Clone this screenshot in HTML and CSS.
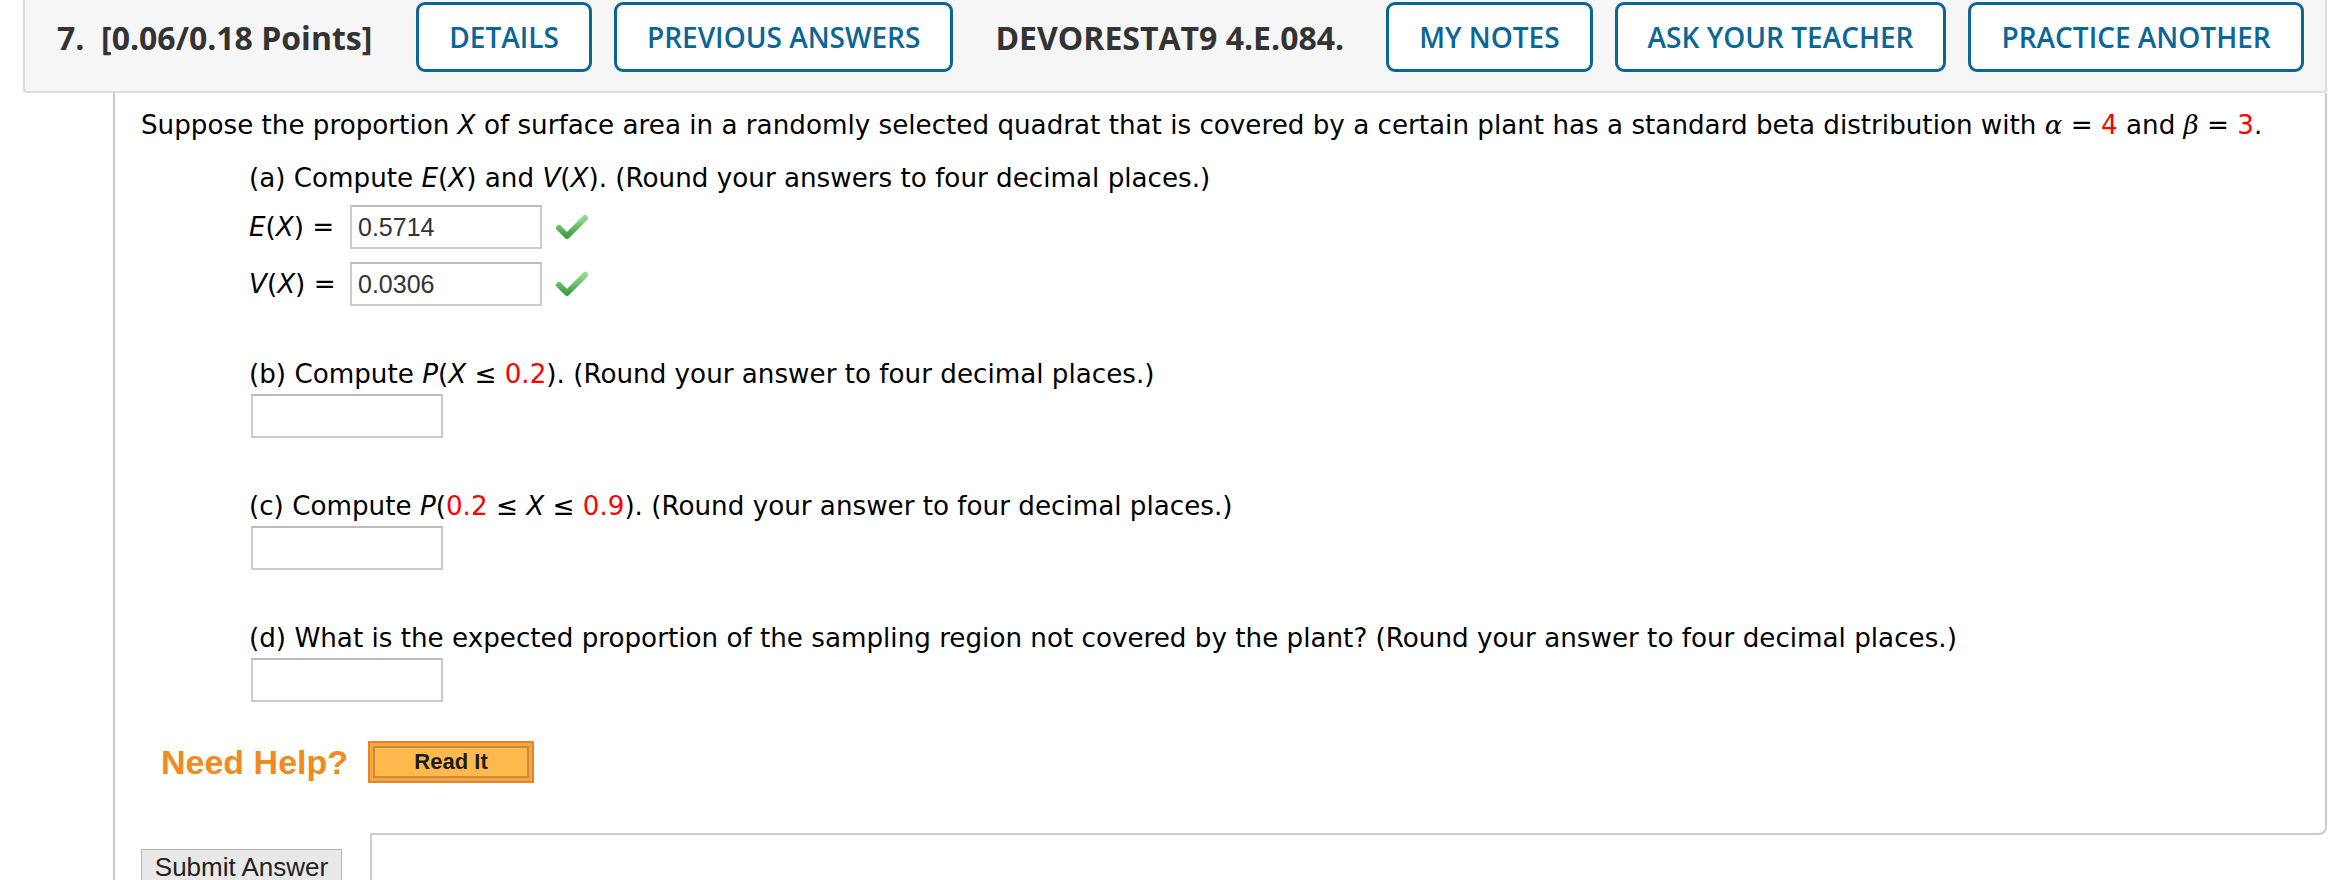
FILE: index.html
```html
<!DOCTYPE html>
<html lang="en">

<head>
  <meta charset="UTF-8" />
  <title>Question 7</title>
  <link rel="stylesheet" href="styles.css">
</head>

<body>
  <div class="qhead">
    <span class="qnum">7.&nbsp; [0.06/0.18 Points]</span>
    <button class="hbtn">DETAILS</button>
    <button class="hbtn">PREVIOUS ANSWERS</button>
    <span class="qcode">DEVORESTAT9 4.E.084.</span>
    <button class="hbtn">MY NOTES</button>
    <button class="hbtn">ASK YOUR TEACHER</button>
    <button class="hbtn">PRACTICE ANOTHER</button>
  </div>

  <div class="qbody">
    <p class="intro">Suppose the proportion <i>X</i> of surface area in a randomly selected quadrat that is covered by a certain plant has a standard beta distribution with <i class="gk">α</i> = <span class="red">4</span> and <i class="gk">β</i> = <span class="red">3</span>.</p>

    <div class="part">
      <p>(a) Compute <i>E</i>(<i>X</i>) and <i>V</i>(<i>X</i>). (Round your answers to four decimal places.)</p>
      <div class="ans-row">
        <span class="lbl"><i>E</i>(<i>X</i>) =</span>
        <input class="ans" type="text" value="0.5714">
        <svg class="check" width="34" height="28" viewBox="0 0 34 28">
          <defs>
            <linearGradient id="g1" x1="0" y1="0" x2="0" y2="1">
              <stop offset="0" stop-color="#8fdc8a" />
              <stop offset="1" stop-color="#3f9f45" />
            </linearGradient>
          </defs>
          <path d="M4 15 L12 23 L30 5" fill="none" stroke="url(#g1)" stroke-width="6" stroke-linecap="round" stroke-linejoin="round" />
        </svg>
      </div>
      <div class="ans-row">
        <span class="lbl"><i>V</i>(<i>X</i>) =</span>
        <input class="ans" type="text" value="0.0306">
        <svg class="check" width="34" height="28" viewBox="0 0 34 28">
          <path d="M4 15 L12 23 L30 5" fill="none" stroke="url(#g1)" stroke-width="6" stroke-linecap="round" stroke-linejoin="round" />
        </svg>
      </div>
    </div>

    <div class="part spaced">
      <p>(b) Compute <i>P</i>(<i>X</i> ≤ <span class="red">0.2</span>). (Round your answer to four decimal places.)</p>
      <input class="ans blank" type="text">
    </div>

    <div class="part spaced">
      <p>(c) Compute <i>P</i>(<span class="red">0.2</span> ≤ <i>X</i> ≤ <span class="red">0.9</span>). (Round your answer to four decimal places.)</p>
      <input class="ans blank" type="text">
    </div>

    <div class="part spaced">
      <p>(d) What is the expected proportion of the sampling region not covered by the plant? (Round your answer to four decimal places.)</p>
      <input class="ans blank" type="text">
    </div>

    <div class="help">
      <span class="help-txt">Need Help?</span>
      <button class="readit">Read It</button>
    </div>
  </div>

  <div class="qfoot">
    <div class="tab">
      <button class="submit">Submit Answer</button>
    </div>
  </div>
</body>

</html>
```

FILE: styles.css
```css
body {
  margin: 0;
  background: #fff;
  font-family: "DejaVu Sans", Verdana, sans-serif;
  color: #000;
  overflow: hidden;
}

/* question header bar */
.qhead {
  margin-left: 23px;
  margin-right: 5px;
  display: flex;
  align-items: center;
  gap: 22px;
  padding: 2px 21px 19px 32px;
  background: #f6f6f6;
  border: 2px solid #ddd;
  border-top: none;
  border-radius: 0 0 4px 4px;
  font-family: "Open Sans", sans-serif;
}

.qnum {
  font-size: 32px;
  font-weight: 700;
  color: #333;
  margin-right: 22px;
  white-space: pre;
}

.qcode {
  font-size: 32px;
  font-weight: 700;
  color: #333;
  margin: 0 20px;
}

.hbtn {
  height: 70px;
  padding: 0 30px;
  background: #fff;
  border: 3px solid #0a6697;
  border-radius: 9px;
  color: #0a6697;
  font-family: "Open Sans", sans-serif;
  font-size: 28px;
  font-weight: 600;
}

/* question body */
.qbody {
  margin-left: 113px;
  margin-right: 5px;
  padding: 14px 0 50px 26px;
  border: 2px solid #ccc;
  border-top: none;
  border-bottom-right-radius: 8px;
  font-size: 26.2px;
  line-height: 36px;
}

.qbody p {
  margin: 0;
}

.red {
  color: #f00;
}

.gk {
  font-family: "DejaVu Serif", serif;
}

.part {
  padding-left: 108px;
  margin-top: 17px;
}

.part.spaced {
  margin-top: 50px;
}

.ans-row {
  display: flex;
  align-items: center;
  margin-top: 9px;
}

.ans-row + .ans-row {
  margin-top: 13px;
}

.lbl {
  width: 101px;
}

.ans {
  box-sizing: border-box;
  width: 192px;
  height: 44px;
  padding: 0 6px;
  border: 2px solid #ccc;
  border-top-color: #bbb;
  font-family: "Liberation Sans", Arial, sans-serif;
  font-size: 25px;
  color: #333;
  background: #fff;
}

.ans.blank {
  display: block;
  margin-top: 2px;
  margin-left: 2px;
}

.check {
  margin-left: 13px;
}

/* help row */
.help {
  display: flex;
  align-items: center;
  gap: 20px;
  margin: 39px 0 0 20px;
}

.help-txt {
  font-family: "Liberation Sans", Arial, sans-serif;
  font-weight: 700;
  font-size: 34px;
  color: #f28a22;
}

.readit {
  width: 166px;
  height: 42px;
  background: #ffb94d;
  border: 2px solid #e3852c;
  box-shadow: inset 0 0 0 3px #f9a53e, inset 0 0 0 5px #c98b42;
  font-family: "Liberation Sans", Arial, sans-serif;
  font-weight: 700;
  font-size: 22px;
  color: #1c1c1c;
}

/* submit tab under the body */
.qfoot {
  margin-left: 113px;
  margin-top: -2px;
}

.tab {
  width: 259px;
  height: 60px;
  padding: 16px 0 0 26px;
  box-sizing: border-box;
  background: #fff;
  border-left: 2px solid #ccc;
  border-right: 2px solid #ccc;
}

.submit {
  width: 201px;
  padding: 2px 0 6px;
  background: #e8e8e8;
  border: 1px solid #b5b5b5;
  font-family: "Liberation Sans", Arial, sans-serif;
  font-size: 26px;
  color: #222;
}
```
